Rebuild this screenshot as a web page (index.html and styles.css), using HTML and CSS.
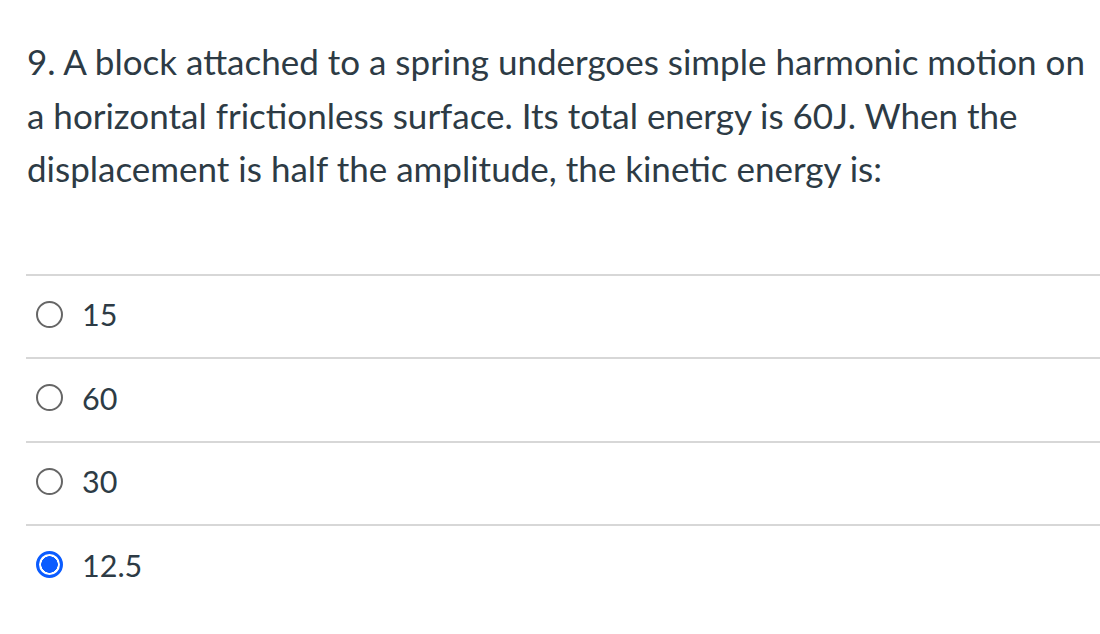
FILE: index.html
```html
<!DOCTYPE html>
<html>
<head>
<meta charset="utf-8">
<link rel="stylesheet" href="styles.css">
</head>
<body>
<div class="question">
  <p class="question-text">9. A block attached to a spring undergoes simple harmonic motion on a horizontal frictionless surface. Its total energy is 60J. When the displacement is half the amplitude, the kinetic energy is:</p>
  <div class="answers">
    <label class="answer"><span class="radio"></span><span class="answer-text">15</span></label>
    <label class="answer"><span class="radio"></span><span class="answer-text">60</span></label>
    <label class="answer"><span class="radio"></span><span class="answer-text">30</span></label>
    <label class="answer"><span class="radio checked"></span><span class="answer-text">12.5</span></label>
  </div>
</div>
</body>
</html>
```

FILE: styles.css
```css
html, body {
  margin: 0;
  padding: 0;
  background: #ffffff;
}
body {
  font-family: Lato, "Liberation Sans", sans-serif;
  color: #2d3b45;
}
.question {
  padding-top: 35px;
}
.question-text {
  margin: 0 0 0 27px;
  padding-right: 6px;
  font-size: 35px;
  line-height: 53.5px;
}
.answers {
  margin-left: 26px;
  margin-top: 78px;
}
.answer {
  box-sizing: border-box;
  display: flex;
  align-items: center;
  gap: 19px;
  height: 83.5px;
  padding-bottom: 4px;
  border-top: 2px solid #d7d7d7;
  padding-left: 10px;
  font-size: 30.5px;
}
.radio {
  box-sizing: border-box;
  width: 27px;
  height: 27px;
  border: 2.5px solid #666666;
  border-radius: 50%;
  flex: none;
}
.radio.checked {
  border: 3px solid #0b5cff;
  background: radial-gradient(circle, #0b5cff 0 8px, #ffffff 8.5px);
}
```
